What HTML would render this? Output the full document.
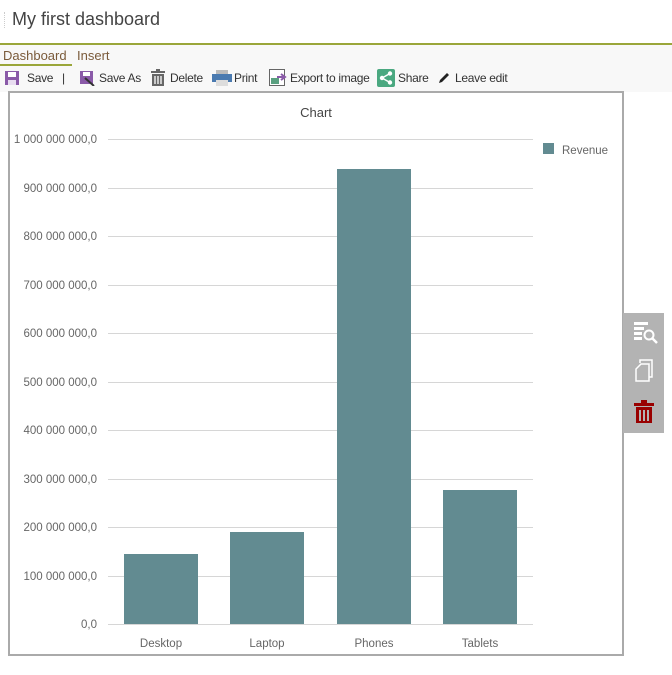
<!DOCTYPE html>
<html><head><meta charset="utf-8"><style>
body{margin:0;width:672px;height:675px;background:#fff;font-family:"Liberation Sans",sans-serif;position:relative;overflow:hidden}
.a{position:absolute}
.tb{font-size:12px;color:#333;top:71px;white-space:nowrap;letter-spacing:-0.3px}
</style></head><body>
<div class="a" style="left:4px;top:12px;width:2px;height:16px;border-left:1px dotted #ccc"></div>
<div class="a" style="left:12px;top:9px;font-size:18px;color:#444">My first dashboard</div>
<div class="a" style="left:0;top:43px;width:672px;height:2px;background:#9aa63a"></div>
<div class="a" style="left:0;top:45px;width:672px;height:47px;background:#f8f8f8"></div>
<div class="a" style="left:3px;top:48px;font-size:13px;color:#7a5a3a">Dashboard</div>
<div class="a" style="left:0;top:64px;width:72px;height:2px;background:#9aa63a"></div>
<div class="a" style="left:77px;top:48px;font-size:13px;color:#7a5a3a">Insert</div>
<svg class="a" style="left:4px;top:70px" width="16" height="16"><rect x="1" y="1" width="14" height="14" fill="#8a5aa8"/><rect x="4" y="2" width="8" height="5" fill="#fff"/><rect x="4" y="10" width="8" height="5" fill="#e8ddf0"/></svg>
<div class="a tb" style="left:27px">Save</div>
<div class="a tb" style="left:62px">|</div>
<svg class="a" style="left:79px;top:70px" width="16" height="16"><rect x="1" y="1" width="13" height="13" fill="#8a5aa8"/><rect x="4" y="2" width="7" height="4" fill="#fff"/><path d="M6 8l9 8" stroke="#333" stroke-width="2"/></svg>
<div class="a tb" style="left:99px">Save As</div>
<svg class="a" style="left:150px;top:69px" width="16" height="18"><rect x="1" y="2" width="14" height="2" fill="#666"/><rect x="6" y="0" width="4" height="2" fill="#666"/><rect x="2" y="5" width="12" height="12" fill="#666"/><path d="M5 7v8M8 7v8M11 7v8" stroke="#fff" stroke-width="1.3"/></svg>
<div class="a tb" style="left:170px">Delete</div>
<svg class="a" style="left:212px;top:70px" width="20" height="16"><rect x="4" y="0" width="12" height="4" fill="#bbb"/><rect x="0" y="4" width="20" height="8" fill="#4a7ab0"/><rect x="4" y="10" width="12" height="6" fill="#ddd"/></svg>
<div class="a tb" style="left:234px">Print</div>
<svg class="a" style="left:269px;top:69px" width="18" height="18"><rect x="0.5" y="0.5" width="15" height="16" fill="#fff" stroke="#666"/><rect x="2" y="9" width="8" height="6" fill="#5aa080"/><path d="M8 8h7M12 5l4 3-4 3" stroke="#8a5aa8" stroke-width="2" fill="none"/></svg>
<div class="a tb" style="left:290px">Export to image</div>
<svg class="a" style="left:377px;top:69px" width="18" height="18"><rect width="18" height="18" rx="2" fill="#4aa880"/><circle cx="5" cy="9" r="2.2" fill="#fff"/><circle cx="13" cy="4.5" r="2.2" fill="#fff"/><circle cx="13" cy="13.5" r="2.2" fill="#fff"/><path d="M5 9L13 4.5M5 9L13 13.5" stroke="#fff" stroke-width="1.4"/></svg>
<div class="a tb" style="left:398px">Share</div>
<svg class="a" style="left:437px;top:71px" width="14" height="14"><path d="M2 12l1-3 7-7 2 2-7 7z" fill="#222"/></svg>
<div class="a tb" style="left:455px">Leave edit</div>

<div class="a" style="left:8px;top:91px;width:612px;height:561px;border:2px solid #aaa;background:#fff"></div>
<svg class="a" style="left:0;top:0" width="672" height="675" font-family="Liberation Sans,sans-serif" font-size="11.5" fill="#666">
<text x="316" y="117" text-anchor="middle" font-size="13" fill="#444">Chart</text>
<g stroke="#d6d6d6" stroke-width="1">
<line x1="108" x2="533" y1="139.5" y2="139.5"/><line x1="108" x2="533" y1="188.5" y2="188.5"/><line x1="108" x2="533" y1="236.5" y2="236.5"/><line x1="108" x2="533" y1="285.5" y2="285.5"/><line x1="108" x2="533" y1="333.5" y2="333.5"/><line x1="108" x2="533" y1="382.5" y2="382.5"/><line x1="108" x2="533" y1="430.5" y2="430.5"/><line x1="108" x2="533" y1="479.5" y2="479.5"/><line x1="108" x2="533" y1="527.5" y2="527.5"/><line x1="108" x2="533" y1="576.5" y2="576.5"/><line x1="108" x2="533" y1="624.5" y2="624.5"/>
</g>
<g text-anchor="end">
<text x="97" y="143">1 000 000 000,0</text><text x="97" y="192">900 000 000,0</text><text x="97" y="240">800 000 000,0</text><text x="97" y="289">700 000 000,0</text><text x="97" y="337">600 000 000,0</text><text x="97" y="386">500 000 000,0</text><text x="97" y="434">400 000 000,0</text><text x="97" y="483">300 000 000,0</text><text x="97" y="531">200 000 000,0</text><text x="97" y="580">100 000 000,0</text><text x="97" y="628">0,0</text>
</g>
<g fill="#628b91">
<rect x="124" y="554" width="74" height="70"/><rect x="230" y="532" width="74" height="92"/><rect x="337" y="169" width="74" height="455"/><rect x="443" y="490" width="74" height="134"/>
<rect x="543" y="143" width="11" height="11"/>
</g>
<g text-anchor="middle"><text x="161" y="647">Desktop</text><text x="267" y="647">Laptop</text><text x="374" y="647">Phones</text><text x="480" y="647">Tablets</text></g>
<text x="562" y="154">Revenue</text>
</svg>
<div class="a" style="left:623px;top:313px;width:41px;height:120px;background:#b3b3b3"></div>
<svg class="a" style="left:632px;top:320px" width="28" height="26"><g fill="#fff"><rect x="2" y="2" width="14" height="3"/><rect x="2" y="7" width="10" height="3"/><rect x="2" y="12" width="8" height="3"/><rect x="2" y="17" width="8" height="3"/></g><circle cx="17" cy="15" r="4.5" fill="none" stroke="#fff" stroke-width="2"/><path d="M20 18l5 5" stroke="#fff" stroke-width="2.5"/></svg>
<svg class="a" style="left:633px;top:358px" width="22" height="26"><path d="M7 5V2h12v17h-3" fill="none" stroke="#fff" stroke-width="1.5"/><path d="M8 6h8v17H3V11z" fill="none" stroke="#fff" stroke-width="1.5"/></svg>
<svg class="a" style="left:633px;top:399px" width="22" height="26"><rect x="1" y="4" width="20" height="3" fill="#900"/><rect x="8" y="1" width="6" height="3" fill="#900"/><rect x="3" y="8" width="16" height="16" fill="#900"/><path d="M7 11v11M11 11v11M15 11v11" stroke="#b3b3b3" stroke-width="2"/></svg>
</body></html>
